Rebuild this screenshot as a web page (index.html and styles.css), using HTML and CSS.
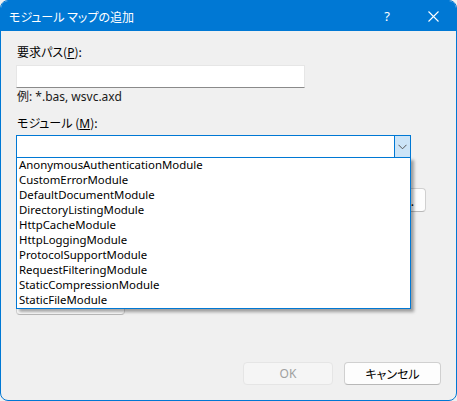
FILE: index.html
```html
<!DOCTYPE html>
<html lang="ja">
<head>
<meta charset="utf-8">
<link rel="stylesheet" href="styles.css">
</head>
<body>
<div class="window">
  <div class="titlebar">
    <span class="title">モジュール マップの追加</span>
    <span class="help">?</span>
    <span class="close">
      <svg width="11" height="11" viewBox="0 0 11 11"><path d="M0.5 0.5L10.5 10.5M10.5 0.5L0.5 10.5" stroke="#fff" stroke-width="1.1" fill="none"/></svg>
    </span>
  </div>
  <div class="content">
    <div class="label lab1">要求パス(<u>P</u>):</div>
    <div class="textbox"></div>
    <div class="hint">例: *.bas, wsvc.axd</div>
    <div class="label lab2">モジュール (<u>M</u>):</div>
    <div class="combo-wrap">
      <div class="combo">
        <div class="combo-field"></div>
        <div class="combo-btn">
          <svg width="9" height="6" viewBox="0 0 9 6"><path d="M0.5 0.8L4.5 4.8L8.5 0.8" stroke="#555" stroke-width="1" fill="none"/></svg>
        </div>
      </div>
      <ul class="list">
        <li>AnonymousAuthenticationModule</li>
        <li>CustomErrorModule</li>
        <li>DefaultDocumentModule</li>
        <li>DirectoryListingModule</li>
        <li>HttpCacheModule</li>
        <li>HttpLoggingModule</li>
        <li>ProtocolSupportModule</li>
        <li>RequestFilteringModule</li>
        <li>StaticCompressionModule</li>
        <li>StaticFileModule</li>
      </ul>
    </div>
    <div class="hidden-row">
      <div class="btn small">...</div>
    </div>
    <div class="btn wide"></div>
    <div class="footer">
      <div class="btn ok">OK</div>
      <div class="btn cancel">キャンセル</div>
    </div>
  </div>
</div>
</body>
</html>
```
FILE: styles.css
```css
html, body {
  margin: 0;
  padding: 0;
  background: #f0f0f0;
}
.window {
  box-sizing: border-box;
  width: 457px;
  height: 401px;
  border: 1px solid #0078d4;
  border-radius: 8px;
  overflow: hidden;
  background: #f0f0f0;
  display: flex;
  flex-direction: column;
  font-family: "Segoe UI", "Noto Sans", "Noto Sans CJK JP", sans-serif;
  font-size: 12px;
  color: #000;
}
.titlebar {
  height: 30px;
  background: #0078d4;
  color: #fff;
  display: flex;
  align-items: center;
  flex-shrink: 0;
}
.title {
  padding-left: 8px;
  font-family: "Noto Sans CJK JP", sans-serif;
  font-feature-settings: "palt";
  font-size: 12px;
  flex: 1;
}
.help {
  font-family: "Noto Sans", sans-serif;
  font-size: 13px;
  width: 46px;
  text-align: center;
}
.close {
  width: 46px;
  height: 30px;
  display: flex;
  align-items: center;
  justify-content: center;
}
.content {
  flex: 1;
  display: flex;
  flex-direction: column;
  padding: 0 0 0 15px;
  position: relative;
}
.label {
  font-family: "Noto Sans CJK JP", sans-serif;
  font-feature-settings: "palt";
  line-height: 15px;
  padding-left: 1px;
}
.label u {
  font-family: "Noto Sans", sans-serif;
  text-underline-offset: 1px;
}
.lab1 { margin-top: 13px; }
.textbox {
  margin-top: 5px;
  width: 289px;
  height: 23px;
  box-sizing: border-box;
  background: #fff;
  border: 1px solid #e6e6e6;
  border-bottom: 1px solid #8a8a8a;
}
.hint {
  font-family: "Noto Sans", "Noto Sans CJK JP", sans-serif;
  line-height: 15px;
  margin-top: 1px;
  padding-left: 1px;
  color: #1a1a1a;
}
.lab2 { margin-top: 11px; }
.combo-wrap {
  position: relative;
  margin-top: 4px;
  width: 395px;
}
.combo {
  box-sizing: border-box;
  height: 23px;
  width: 395px;
  border: 1px solid #0078d4;
  background: #fff;
  display: flex;
}
.combo-field { flex: 1; }
.combo-btn {
  width: 15px;
  background: #cce4f7;
  border-left: 1px solid #0078d4;
  display: flex;
  align-items: center;
  justify-content: center;
}
.list {
  position: absolute;
  left: 0;
  top: 22px;
  width: 395px;
  box-sizing: border-box;
  margin: 0;
  padding: 0 0 0 2px;
  list-style: none;
  background: #fff;
  border: 1px solid #0078d4;
  box-shadow: 3px 3px 3px rgba(0, 0, 0, 0.35);
  z-index: 2;
  font-size: 11.4px;
}
.list li {
  height: 15px;
  line-height: 14px;
  white-space: nowrap;
}
.btn {
  box-sizing: border-box;
  height: 24px;
  background: #fdfdfd;
  border: 1px solid #d0d0d0;
  border-bottom-color: #b8b8b8;
  border-radius: 4px;
  display: flex;
  align-items: center;
  justify-content: center;
  font-family: "Noto Sans CJK JP", sans-serif;
  font-feature-settings: "palt";
}
.hidden-row {
  margin-top: 30px;
  width: 410px;
  display: flex;
  justify-content: flex-end;
}
.btn.small { width: 34px; }
.btn.wide {
  margin-top: 79px;
  width: 109px;
}
.footer {
  margin-top: auto;
  margin-bottom: 15px;
  padding-right: 15px;
  display: flex;
  justify-content: flex-end;
  gap: 11px;
}
.btn.ok {
  width: 90px;
  height: 23px;
  background: #f5f5f5;
  border-color: #e5e5e5;
  color: #a0a0a0;
  font-family: "Noto Sans", sans-serif;
}
.btn.cancel {
  width: 97px;
  height: 23px;
}
```
